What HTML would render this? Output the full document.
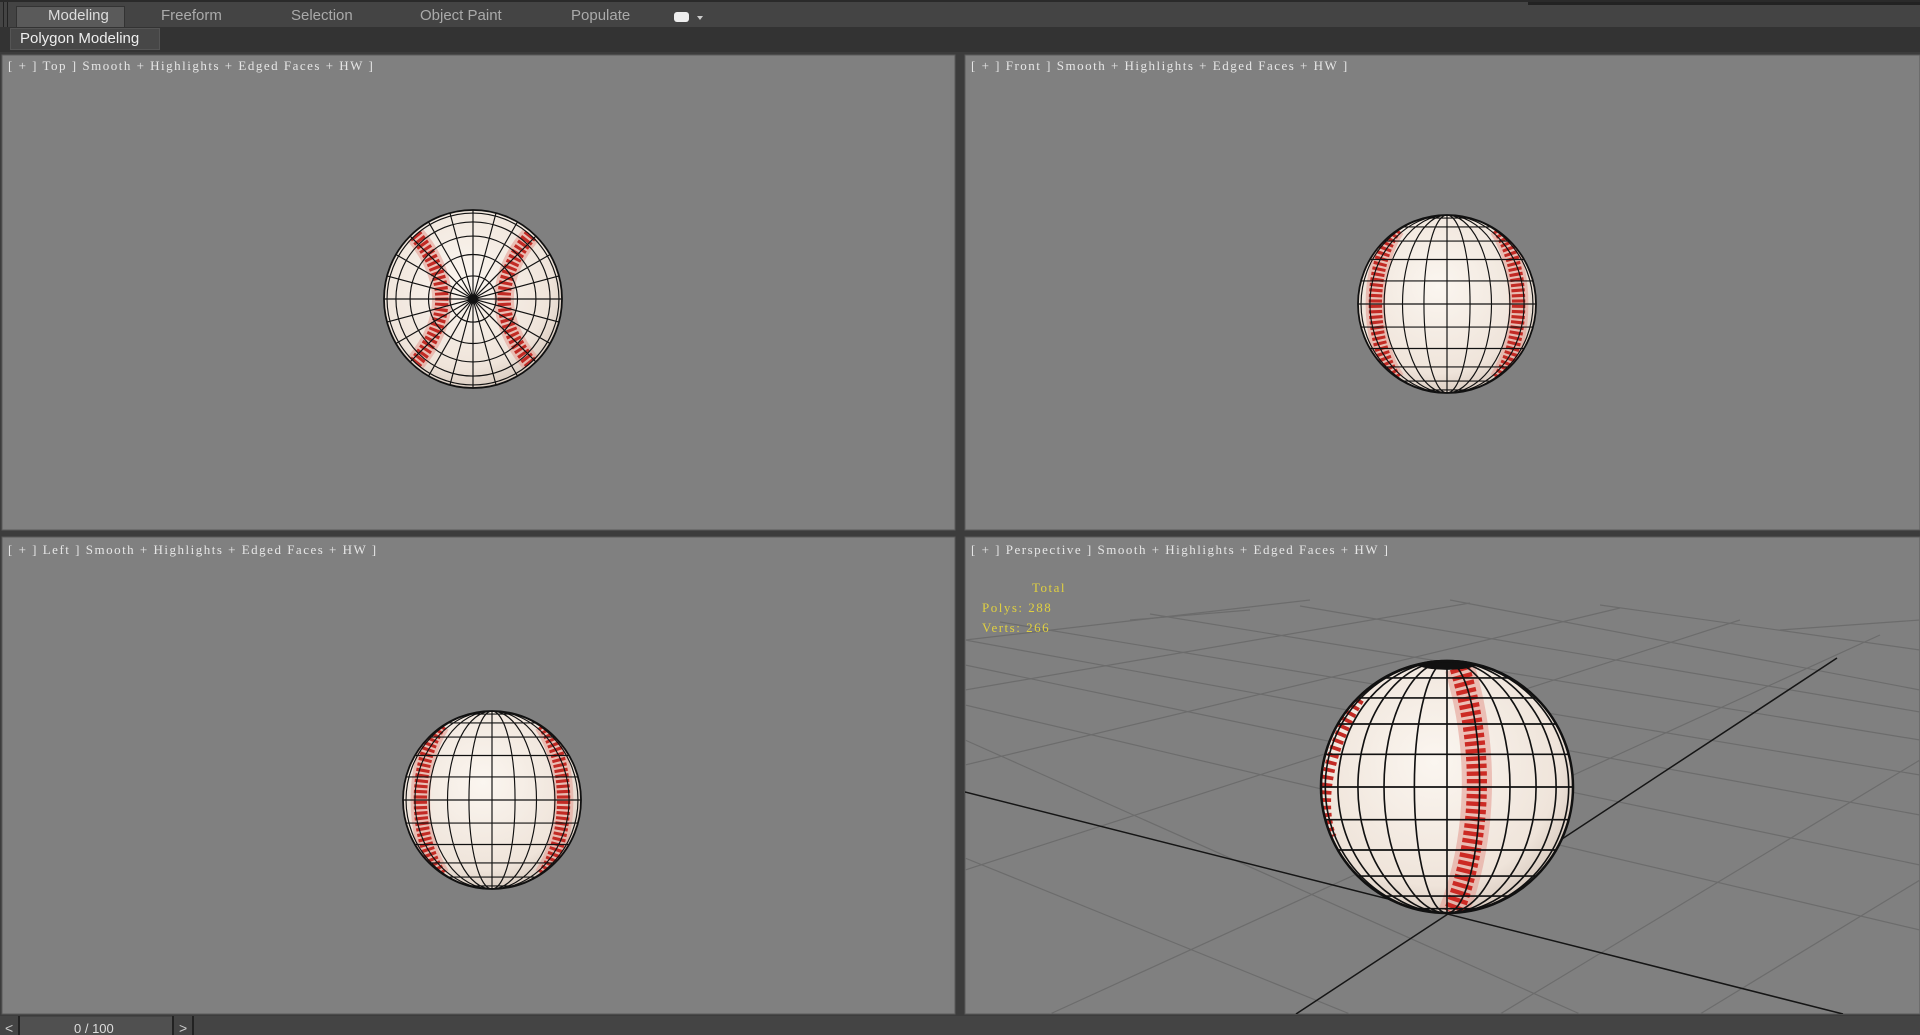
<!DOCTYPE html>
<html><head><meta charset="utf-8"><style>
html,body{margin:0;padding:0;width:1920px;height:1035px;overflow:hidden;background:#3a3a3a;font-family:"Liberation Sans",sans-serif}
.top{position:absolute;left:0;top:0;width:1920px;height:27px;background:#444;border-top:2px solid #2a2a2a;box-sizing:border-box}
.tab{position:absolute;top:3px;height:22px;line-height:22px;font-size:15px;color:#aaa}
.row2{position:absolute;left:0;top:27px;width:1920px;height:25px;background:#333}
.lbl{position:absolute;font-family:"Liberation Serif",serif;font-size:13px;color:#e6e6e6;white-space:pre;letter-spacing:1.5px}
</style></head><body>
<div class="top">
 <div style="position:absolute;left:3px;top:0;width:3px;height:50px;border-left:1px solid #222;border-right:1px solid #222"></div>
 <div style="position:absolute;left:16px;top:4px;width:109px;height:23px;background:#5a5a5a;border:1px solid #333;box-sizing:border-box"></div>
 <div class="tab" style="left:48px;color:#ddd">Modeling</div>
 <div class="tab" style="left:161px">Freeform</div>
 <div class="tab" style="left:291px">Selection</div>
 <div class="tab" style="left:420px">Object Paint</div>
 <div class="tab" style="left:571px">Populate</div>
 <div style="position:absolute;left:674px;top:10px;width:15px;height:10px;background:#eee;border-radius:3px"></div>
 <div style="position:absolute;left:697px;top:14px;width:0;height:0;border-left:3px solid transparent;border-right:3px solid transparent;border-top:4px solid #ccc"></div>
 <div style="position:absolute;left:1528px;top:0;width:392px;height:3px;background:#222"></div>
</div>
<div class="row2">
 <div style="position:absolute;left:10px;top:1px;width:150px;height:22px;background:#474747;border:1px solid #555;box-sizing:border-box"></div>
 <div style="position:absolute;left:20px;top:2px;font-size:15px;color:#eee;line-height:20px">Polygon Modeling</div>
</div>
<svg width="1920" height="1035" style="position:absolute;left:0;top:0" xmlns="http://www.w3.org/2000/svg">
<defs>
 <radialGradient id="g" cx="0.45" cy="0.4" r="0.7"><stop offset="0" stop-color="#fbf6f0"/><stop offset="0.7" stop-color="#efe4da"/><stop offset="1" stop-color="#c9b9ad"/></radialGradient>
 <clipPath id="cc"><circle r="100"/></clipPath>
 <g id="grid" clip-path="url(#cc)" fill="none" stroke="#111" stroke-width="1.3">
  <line x1="-100" y1="0" x2="100" y2="0"/>
  <line x1="-100" y1="25.9" x2="100" y2="25.9"/><line x1="-100" y1="-25.9" x2="100" y2="-25.9"/>
  <line x1="-100" y1="50" x2="100" y2="50"/><line x1="-100" y1="-50" x2="100" y2="-50"/>
  <line x1="-100" y1="70.7" x2="100" y2="70.7"/><line x1="-100" y1="-70.7" x2="100" y2="-70.7"/>
  <line x1="-100" y1="86.6" x2="100" y2="86.6"/><line x1="-100" y1="-86.6" x2="100" y2="-86.6"/>
  <line x1="-100" y1="96.6" x2="100" y2="96.6"/><line x1="-100" y1="-96.6" x2="100" y2="-96.6"/>
  <line x1="0" y1="-100" x2="0" y2="100"/>
  <ellipse rx="25.9" ry="100"/><ellipse rx="50" ry="100"/><ellipse rx="70.7" ry="100"/><ellipse rx="86.6" ry="100"/><ellipse rx="96.6" ry="100"/>
 </g>
 <g id="fb">
  <circle r="100" fill="url(#g)"/>
  <g clip-path="url(#cc)" fill="none">
   <path d="M-58 -85 C-88 -40 -88 40 -58 85" stroke="#e4a096" stroke-width="22" opacity="0.6"/>
   <path d="M58 -85 C88 -40 88 40 58 85" stroke="#e4a096" stroke-width="22" opacity="0.6"/>
   <path d="M-58 -85 C-88 -40 -88 40 -58 85" stroke="#c22a24" stroke-width="15" stroke-dasharray="3.5 2.5"/>
   <path d="M58 -85 C88 -40 88 40 58 85" stroke="#c22a24" stroke-width="15" stroke-dasharray="3.5 2.5"/>
  </g>
  <use href="#grid"/>
  <circle r="100" fill="none" stroke="#111" stroke-width="2"/>
 </g>
 <g id="tb">
  <circle r="100" fill="url(#g)"/>
  <g clip-path="url(#cc)" fill="none">
   <path d="M-65 -72 Q-5 0 -65 72" stroke="#e4a096" stroke-width="22" opacity="0.6"/>
   <path d="M65 -72 Q5 0 65 72" stroke="#e4a096" stroke-width="22" opacity="0.6"/>
   <path d="M-65 -72 Q-5 0 -65 72" stroke="#c22a24" stroke-width="15" stroke-dasharray="3.5 2.5"/>
   <path d="M65 -72 Q5 0 65 72" stroke="#c22a24" stroke-width="15" stroke-dasharray="3.5 2.5"/>
  </g>
  <g fill="none" stroke="#111" stroke-width="1.3">
   <circle r="96.6"/><circle r="86.6"/><circle r="70.7"/><circle r="50"/><circle r="25.9"/>
   <path d="M-100 0H100M0 -100V100M-96.6 -25.9L96.6 25.9M-96.6 25.9L96.6 -25.9M-25.9 -96.6L25.9 96.6M25.9 -96.6L-25.9 96.6M-86.6 -50L86.6 50M-86.6 50L86.6 -50M-50 -86.6L50 86.6M50 -86.6L-50 86.6M-70.7 -70.7L70.7 70.7M-70.7 70.7L70.7 -70.7"/>
  </g>
  <circle r="5" fill="#111"/>
  <circle r="100" fill="none" stroke="#111" stroke-width="2"/>
 </g>
 <g id="pb">
  <circle r="100" fill="url(#g)"/>
  <g clip-path="url(#cc)" fill="none">
   <path d="M10 -95 C30 -30 28 40 5 100" stroke="#e4a096" stroke-width="24" opacity="0.6"/>
   <path d="M10 -95 C30 -30 28 40 5 100" stroke="#cc2a24" stroke-width="16" stroke-dasharray="3.5 2.5"/>
   <path d="M-70 -70 C-100 -20 -100 20 -92 40" stroke="#c22a24" stroke-width="9" stroke-dasharray="3 3"/>
  </g>
  <use href="#grid"/>
  <ellipse cx="0" cy="-97" rx="22" ry="4" fill="#111"/>
  <circle r="100" fill="none" stroke="#111" stroke-width="2"/>
 </g>
 <clipPath id="pv"><rect x="965" y="536" width="955" height="478"/></clipPath>
</defs>
<rect x="0" y="52" width="1920" height="965" fill="#3c3c3c"/>
<rect x="2" y="55" width="953" height="475" fill="#808080" stroke="#5a5a5a"/>
<rect x="965" y="55" width="955" height="475" fill="#808080" stroke="#5a5a5a"/>
<rect x="2" y="537" width="953" height="477" fill="#808080" stroke="#5a5a5a"/>
<rect x="965" y="537" width="955" height="477" fill="#808080" stroke="#5a5a5a"/>
<g clip-path="url(#pv)" stroke="#6c6c6c" stroke-width="1.2">
 <line x1="965" y1="705" x2="1920" y2="930"/>
 <line x1="965" y1="665" x2="1920" y2="865"/>
 <line x1="965" y1="640" x2="1920" y2="815"/>
 <line x1="1000" y1="622" x2="1920" y2="775"/>
 <line x1="1150" y1="614" x2="1920" y2="740"/>
 <line x1="1300" y1="606" x2="1920" y2="712"/>
 <line x1="1450" y1="600" x2="1920" y2="690"/>
 <line x1="965" y1="740" x2="1580" y2="1014"/>
 <line x1="965" y1="858" x2="1350" y2="1014"/>
 <line x1="965" y1="640" x2="1310" y2="600"/>
 <line x1="965" y1="690" x2="1470" y2="603"/>
 <line x1="965" y1="765" x2="1620" y2="608"/>
 <line x1="965" y1="870" x2="1740" y2="620"/>
 <line x1="1050" y1="1014" x2="1880" y2="635"/>
 <line x1="1500" y1="1014" x2="1920" y2="760"/>
 <line x1="1700" y1="1014" x2="1920" y2="880"/>
 <line x1="1130" y1="620" x2="1250" y2="610"/>
 <line x1="1600" y1="605" x2="1920" y2="650"/>
 <line x1="1780" y1="630" x2="1920" y2="620"/>
</g>
<g clip-path="url(#pv)" stroke="#151515" stroke-width="1.5">
 <line x1="965" y1="792" x2="1843" y2="1014"/>
 <line x1="1296" y1="1014" x2="1837" y2="658"/>
</g>
<use href="#tb" transform="translate(473 299) scale(0.89)"/>
<use href="#fb" transform="translate(1447 304) scale(0.89)"/>
<use href="#fb" transform="translate(492 800) scale(0.89)"/>
<use href="#pb" transform="translate(1447 787) scale(1.26)"/>
<rect x="0" y="1016" width="1920" height="19" fill="#444"/>
<rect x="20" y="1017" width="152" height="18" fill="#505050"/>
<line x1="19" y1="1016" x2="19" y2="1035" stroke="#222" stroke-width="2"/>
<line x1="173" y1="1016" x2="173" y2="1035" stroke="#222" stroke-width="2"/>
<line x1="193" y1="1016" x2="193" y2="1035" stroke="#222" stroke-width="2"/>
<text x="5" y="1033" fill="#ccc" font-size="14" font-family="Liberation Sans">&lt;</text>
<text x="74" y="1033" fill="#ddd" font-size="13" font-family="Liberation Sans">0 / 100</text>
<text x="179" y="1033" fill="#ccc" font-size="14" font-family="Liberation Sans">&gt;</text>
</svg>
<div class="lbl" style="left:8px;top:58px">[ + ] Top ] Smooth + Highlights + Edged Faces + HW ]</div>
<div class="lbl" style="left:971px;top:58px">[ + ] Front ] Smooth + Highlights + Edged Faces + HW ]</div>
<div class="lbl" style="left:8px;top:542px">[ + ] Left ] Smooth + Highlights + Edged Faces + HW ]</div>
<div class="lbl" style="left:971px;top:542px">[ + ] Perspective ] Smooth + Highlights + Edged Faces + HW ]</div>
<div class="lbl" style="left:1032px;top:580px;color:#e0d040">Total</div>
<div class="lbl" style="left:982px;top:600px;color:#e0d040">Polys: 288</div>
<div class="lbl" style="left:982px;top:620px;color:#e0d040">Verts: 266</div>
</body></html>
